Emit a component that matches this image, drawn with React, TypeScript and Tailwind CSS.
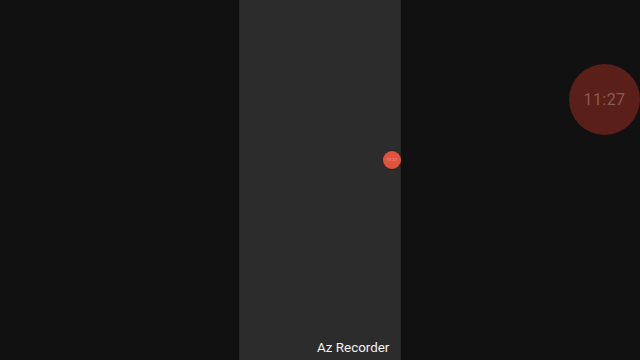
export default function App() {
  return (
    <div className="relative w-[640px] h-[360px] bg-[#111111] flex justify-center overflow-hidden font-['Roboto',sans-serif]">
      <div className="relative w-[162px] h-full bg-[#2d2c2c] border-x border-[#262525]">
        {/* floating record bubble */}
        <div className="absolute left-[143px] top-[151px] w-[18px] h-[18px] rounded-full bg-[#e2533f] flex items-center justify-center">
          <span className="text-[4px] text-[#f3a99b] leading-none">11:27</span>
        </div>
      </div>

      {/* large timer bubble */}
      <div className="absolute left-[569px] top-[64px] w-[71px] h-[71px] rounded-full bg-[#5b1f19] flex items-center justify-center">
        <span className="text-[16px] text-[#8a5a55] tracking-wide">11:27</span>
      </div>

      <div className="absolute left-[317px] top-[339px] text-[13.4px] leading-[18px] text-[#f2f2f2]">Az Recorder</div>
    </div>
  );
}
